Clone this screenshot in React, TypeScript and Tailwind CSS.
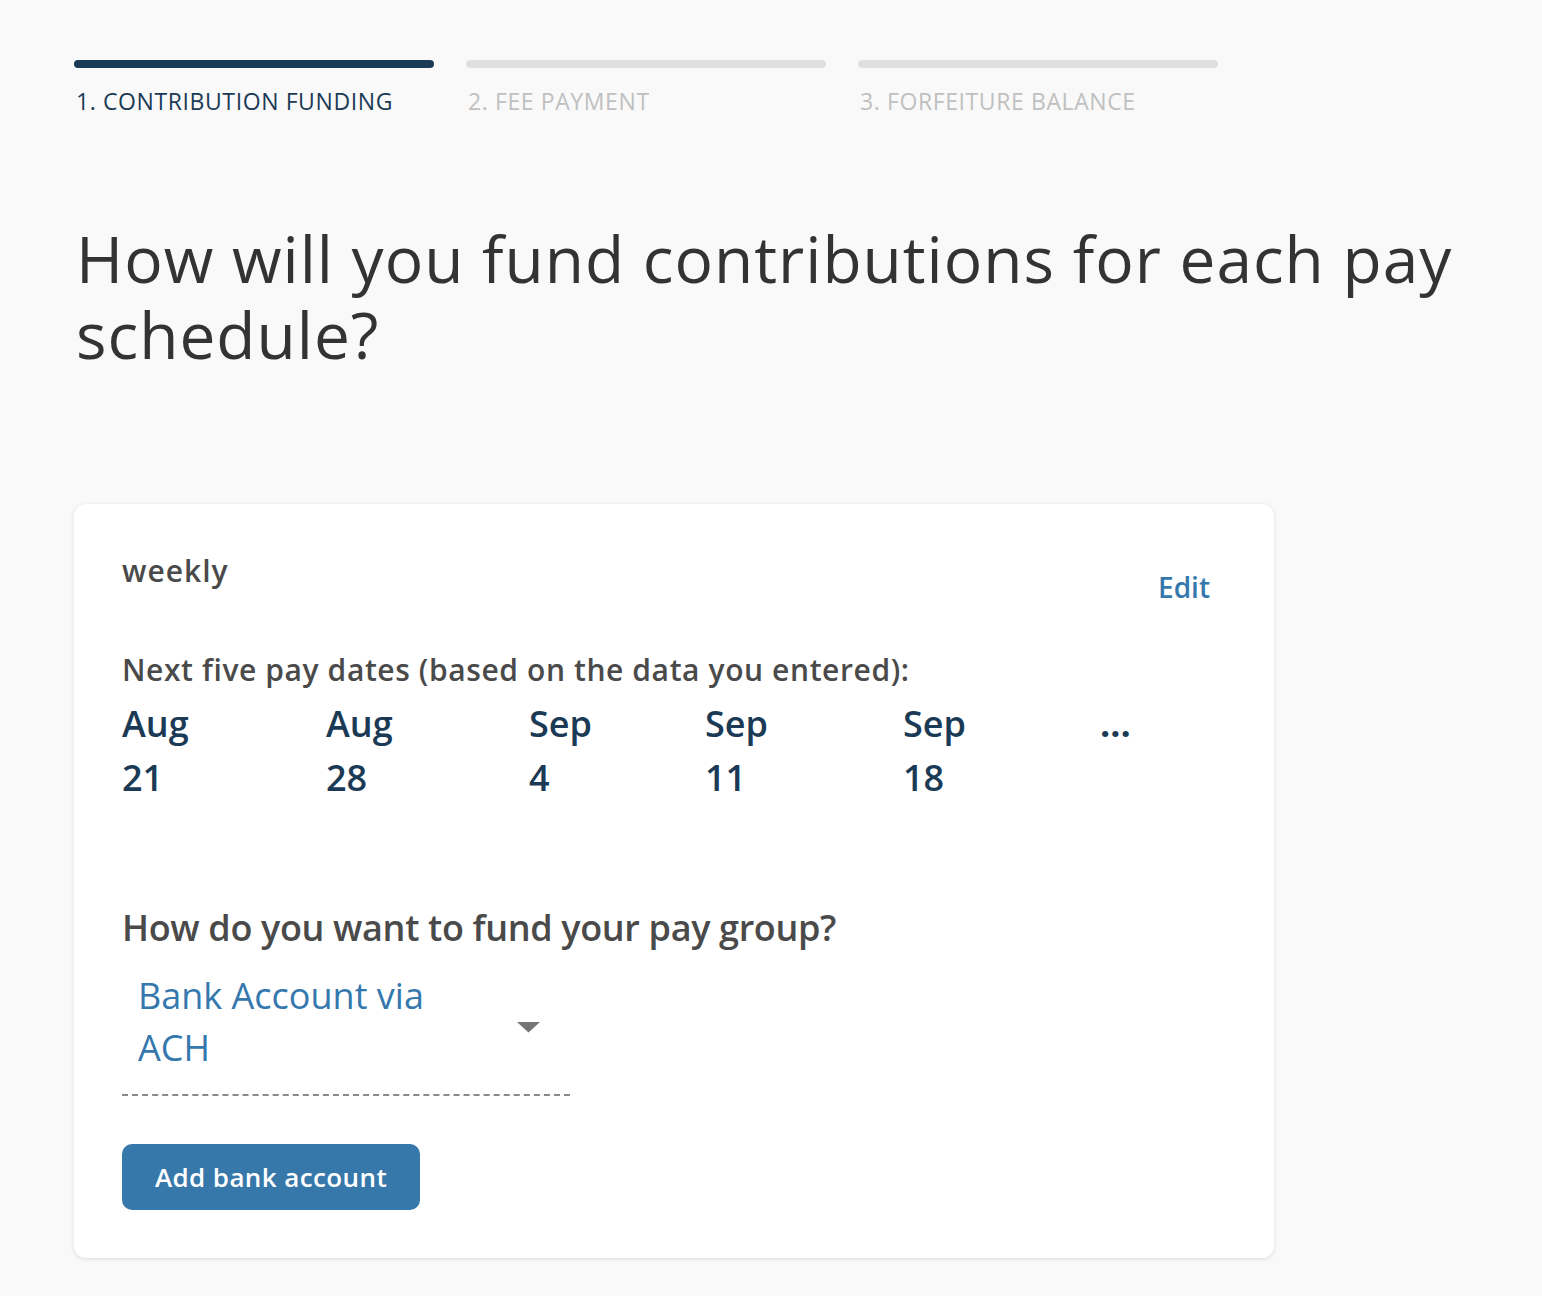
const steps = [
  { label: "1. CONTRIBUTION FUNDING", active: true },
  { label: "2. FEE PAYMENT", active: false },
  { label: "3. FORFEITURE BALANCE", active: false },
];

const dates = [
  { month: "Aug", day: "21", w: "w-[204px]" },
  { month: "Aug", day: "28", w: "w-[203px]" },
  { month: "Sep", day: "4", w: "w-[176px]" },
  { month: "Sep", day: "11", w: "w-[198px]" },
  { month: "Sep", day: "18", w: "w-[197px]" },
];

export default function App() {
  return (
    <div
      className="min-h-[1296px] w-full bg-[#f9f9f9] px-[74px] pt-[60px] pb-[38px]"
      style={{ fontFamily: "'Open Sans', 'Noto Sans', sans-serif" }}
    >
      {/* stepper */}
      <div className="flex gap-8">
        {steps.map((s) => (
          <div key={s.label} className="w-[360px]">
            <div
              className={
                s.active
                  ? "h-2 rounded-full bg-[#1b3a55]"
                  : "h-2 rounded-full bg-[#e0e0e0]"
              }
            />
            <div
              className={
                s.active
                  ? "mt-[18px] pl-[2px] text-[23px] leading-[30px] tracking-[0.6px] text-[#1b3a55]"
                  : "mt-[18px] pl-[2px] text-[23px] leading-[30px] tracking-[0.6px] text-[#c0c0c0]"
              }
            >
              {s.label}
            </div>
          </div>
        ))}
      </div>

      <h1 className="mt-[105px] pl-[2px] text-[64px] leading-[76px] tracking-[1px] text-[#333333]">
        How will you fund contributions for each pay schedule?
      </h1>

      {/* card */}
      <div className="mt-[131px] w-[1200px] rounded-xl bg-white px-12 pt-[49px] pb-12 shadow-[0_1px_4px_rgba(0,0,0,0.12)]">
        <div className="flex items-start justify-between pr-[16px]">
          <div className="text-[30px] font-semibold leading-9 tracking-[1px] text-[#4a4a4a]">weekly</div>
          <button className="mt-[16px] text-[28px] font-semibold leading-9 text-[#3578ad]">Edit</button>
        </div>

        <div className="mt-[47px] text-[30px] font-semibold leading-9 tracking-[0.6px] text-[#4a4a4a]">
          Next five pay dates (based on the data you entered):
        </div>

        <div className="mt-[9px] flex text-[36px] font-semibold leading-[54px] text-[#1b3a55]">
          {dates.map((d, i) => (
            <div key={i} className={d.w}>
              <div>{d.month}</div>
              <div>{d.day}</div>
            </div>
          ))}
          <div className="font-bold">...</div>
        </div>

        <div className="mt-[101px] text-[36px] font-semibold leading-[44px] tracking-[-0.35px] text-[#4a4a4a]">
          How do you want to fund your pay group?
        </div>

        <div className="mt-[20px] flex w-[448px] items-center justify-between border-b-2 border-dashed border-[#8a8a8a] pb-[20px] pl-[16px] pr-[30px]">
          <div className="w-[320px] text-[36px] leading-[52px] text-[#3578ad]">Bank Account via ACH</div>
          <svg width="23" height="11" viewBox="0 0 23 11" className="mt-[10px]">
            <path d="M0 0 L23 0 L11.5 10.5 Z" fill="#757575" />
          </svg>
        </div>

        <button className="mt-[48px] h-[66px] w-[298px] rounded-[10px] bg-[#3778ab] text-[26px] font-semibold tracking-[0.4px] text-white">
          Add bank account
        </button>
      </div>
    </div>
  );
}
